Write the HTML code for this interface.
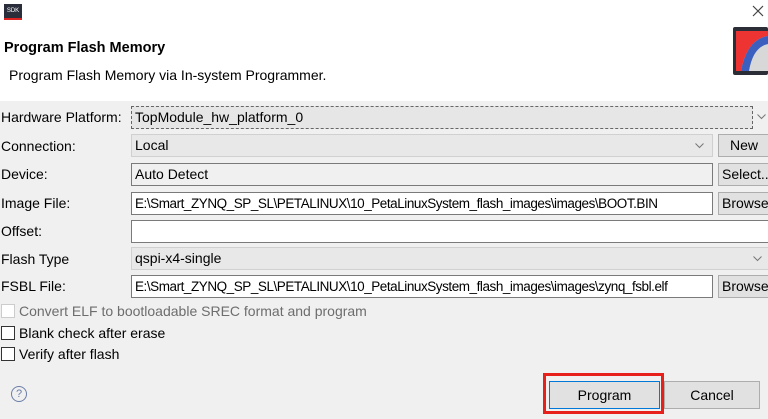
<!DOCTYPE html>
<html><head><meta charset="utf-8"><style>
*{box-sizing:border-box;margin:0;padding:0}
body{width:768px;height:419px;overflow:hidden;background:#f0f0f0;font-family:"Liberation Sans",sans-serif;font-size:14px;color:#000;position:relative}
.a{position:absolute;white-space:nowrap}
.top{position:absolute;left:0;top:0;width:768px;height:101px;background:#fff}
.lbl{position:absolute;left:1px;line-height:16px}
.f{position:absolute;height:23px;line-height:21px;padding-left:3px;border:1px solid #7a7a7a;background:#fff;overflow:hidden;white-space:nowrap}
.g{background:#e8e8e8;border-color:#d0d0d0}
.btn{position:absolute;background:#e1e1e1;border:1px solid #adadad;text-align:center;line-height:21px;height:23px;overflow:hidden;white-space:nowrap}
.arr{position:absolute;right:8px;top:8px}
.cb{position:absolute;left:1px;width:14px;height:14px;border:1px solid #333;background:#fff}
.p{letter-spacing:-0.45px;font-size:13.5px}
</style></head><body>
<div class="top"></div>
<div class="a" style="left:4px;top:4px;width:18px;height:16px;background:#2a2d3a;color:#fff;font-size:6px;line-height:14px;text-align:center;border-bottom:2px solid #d22">SDK</div>
<svg class="a" style="left:752px;top:5px" width="12" height="12"><path d="M1 1L11 11M11 1L1 11" stroke="#444" stroke-width="1.2"/></svg>
<div class="a" style="left:4px;top:40px;font-weight:bold;font-size:14.5px">Program Flash Memory</div>
<div class="a" style="left:9px;top:67px">Program Flash Memory via In-system Programmer.</div>
<svg class="a" style="left:733px;top:27px" width="35" height="48"><rect x="0" y="0" width="35" height="48" rx="2" fill="#2b2e36"/><rect x="3" y="4" width="32" height="40" fill="#d8d8d8"/><path d="M3 4h32v5Q14 12 8 44H3z" fill="#e33"/><path d="M8 44Q14 12 35 9v8Q20 20 16 44z" fill="#3b5fbf"/></svg>

<div class="lbl" style="top:109px">Hardware Platform:</div>
<div class="f g" style="left:131px;top:106px;width:622px;border:1px dashed #666;background:#e6e6e6">TopModule_hw_platform_0</div>
<svg class="a" style="left:757px;top:114px" width="9" height="6"><path d="M0.5 0.5L4.5 4.5L8.5 0.5" fill="none" stroke="#777"/></svg>

<div class="lbl" style="top:138px">Connection:</div>
<div class="f g" style="left:131px;top:134px;width:582px">Local<svg class="arr" width="9" height="6"><path d="M0.5 0.5L4.5 4.5L8.5 0.5" fill="none" stroke="#777"/></svg></div>
<div class="btn" style="left:718px;top:134px;width:52px">New</div>

<div class="lbl" style="top:166px">Device:</div>
<div class="f" style="left:131px;top:163px;width:582px;background:#f0f0f0">Auto Detect</div>
<div class="btn" style="left:718px;top:163px;width:52px;text-align:left;padding-left:3px">Select...</div>

<div class="lbl" style="top:195px">Image File:</div>
<div class="f p" style="left:131px;top:192px;width:582px">E:\Smart_ZYNQ_SP_SL\PETALINUX\10_PetaLinuxSystem_flash_images\images\BOOT.BIN</div>
<div class="btn" style="left:718px;top:192px;width:52px;text-align:left;padding-left:3px">Browse</div>

<div class="lbl" style="top:223px">Offset:</div>
<div class="f" style="left:131px;top:220px;width:640px"></div>

<div class="lbl" style="top:251px">Flash Type</div>
<div class="f g" style="left:131px;top:247px;width:640px">qspi-x4-single<svg class="arr" width="9" height="6"><path d="M0.5 0.5L4.5 4.5L8.5 0.5" fill="none" stroke="#777"/></svg></div>

<div class="lbl" style="top:278px">FSBL File:</div>
<div class="f p" style="left:131px;top:275px;width:582px">E:\Smart_ZYNQ_SP_SL\PETALINUX\10_PetaLinuxSystem_flash_images\images\zynq_fsbl.elf</div>
<div class="btn" style="left:718px;top:275px;width:52px;text-align:left;padding-left:3px">Browse</div>

<div class="cb" style="top:304px;border-color:#ccc"></div>
<div class="a" style="left:19px;top:303px;color:#6d6d6d">Convert ELF to bootloadable SREC format and program</div>
<div class="cb" style="top:326px"></div>
<div class="a" style="left:19px;top:325px">Blank check after erase</div>
<div class="cb" style="top:347px"></div>
<div class="a" style="left:19px;top:346px">Verify after flash</div>

<div class="a" style="left:11px;top:386px;width:16px;height:16px;border:1px solid #6a7ea8;border-radius:50%;color:#6a7ea8;font-size:11px;line-height:14px;text-align:center">?</div>

<div class="a" style="left:543px;top:373px;width:121px;height:41px;border:3px solid #e8201c"></div>
<div class="btn" style="left:549px;top:381px;width:111px;height:28px;line-height:26px;border:1px solid #0078d7">Program</div>
<div class="btn" style="left:664px;top:381px;width:96px;height:28px;line-height:26px">Cancel</div>
</body></html>
